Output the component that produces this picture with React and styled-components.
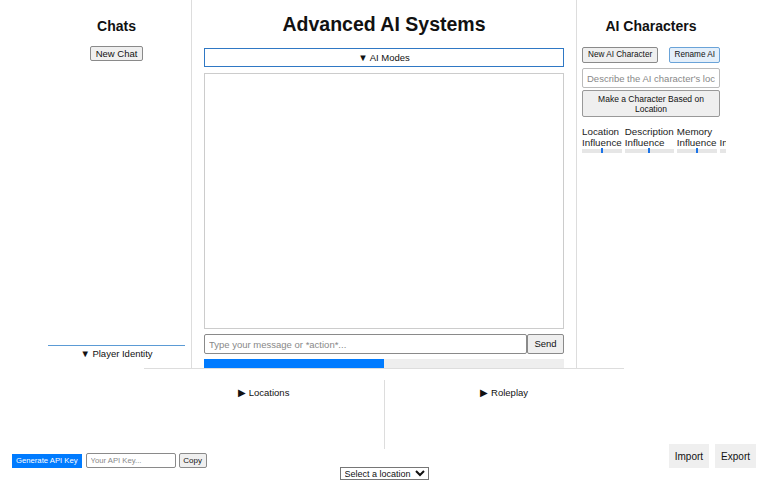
import React from 'react';
import styled, { createGlobalStyle } from 'styled-components';

const GlobalStyle = createGlobalStyle`
  html, body {
    margin: 0;
    padding: 0;
    background: #fff;
  }
  body {
    font-family: "Liberation Sans", Arial, sans-serif;
    color: #111;
    width: 768px;
    height: 480px;
    overflow: hidden;
  }
  * {
    box-sizing: border-box;
  }
  button, input, select {
    font-family: "Liberation Sans", Arial, sans-serif;
  }
`;

const MainRow = styled.div`
  display: flex;
  height: 368px;
`;

const LeftPanel = styled.aside`
  width: 192px;
  border-right: 1px solid #ddd;
  padding: 0 6px 0 48px;
  display: flex;
  flex-direction: column;
`;

const PanelTitle = styled.h2`
  margin: 18px 0 0;
  font-size: 14px;
  line-height: 17px;
  font-weight: 700;
  text-align: center;
`;

const GreyButton = styled.button`
  background: #efefef;
  border: 1px solid #8a8a8a;
  border-radius: 2px;
  color: #111;
  padding: 0 ${p => p.$pad || 5}px;
  font-size: ${p => p.$size || 9.5}px;
  height: ${p => p.$h || 15}px;
  line-height: 1;
  cursor: pointer;
`;

const NewChatButton = styled(GreyButton)`
  align-self: center;
  margin-top: 11px;
`;

const Spacer = styled.div`
  flex: 1;
`;

const Collapsible = styled.div`
  border-top: 1px solid #5b9bd5;
  height: 23px;
  padding-top: 1px;
  font-size: 9.5px;
  line-height: 13px;
  text-align: center;
`;

const CenterPanel = styled.main`
  width: 385px;
  border-right: 1px solid #ddd;
  padding: 0 12px;
  display: flex;
  flex-direction: column;
`;

const Title = styled.h1`
  margin: 13px 0 0;
  font-size: 19.5px;
  line-height: 23px;
  font-weight: 700;
  text-align: center;
`;

const ModesButton = styled.button`
  margin-top: 12px;
  height: 19px;
  width: 100%;
  background: #fff;
  border: 1px solid #2f78c4;
  font-size: 9.5px;
  color: #111;
  padding: 0;
`;

const ChatBox = styled.div`
  margin-top: 6px;
  flex: 1;
  border: 1px solid #ccc;
`;

const InputRow = styled.div`
  margin-top: 5px;
  display: flex;
  height: 20px;
`;

const TextInput = styled.input`
  flex: ${p => (p.$grow ? 1 : 'none')};
  width: ${p => p.$w || 'auto'};
  height: ${p => p.$h || 20}px;
  border: 1px solid ${p => p.$border || '#8a8a8a'};
  border-radius: 2px;
  padding: 0 4px;
  font-size: ${p => p.$size || 9.5}px;
  color: #111;
  outline: none;
  &::placeholder {
    color: #888;
  }
`;

const SendButton = styled(GreyButton)`
  width: 37px;
  padding: 0;
`;

const Progress = styled.div`
  margin-top: 5px;
  height: 9px;
  background: #eee;
  display: flex;
`;

const ProgressFill = styled.div`
  background: #007bff;
  height: 100%;
`;

const RightPanel = styled.aside`
  flex: 1;
  padding-left: 5px;
  overflow: hidden;
`;

const RightInner = styled.div`
  width: 138px;
  display: flex;
  flex-direction: column;
`;

const ButtonRow = styled.div`
  margin-top: 12px;
  display: flex;
  justify-content: space-between;
`;

const RenameButton = styled(GreyButton)`
  background: #e4effa;
  border-color: #6aa3d8;
`;

const DescribeInput = styled(TextInput)`
  margin-top: 5px;
  width: 100%;
`;

const MakeButton = styled.button`
  margin-top: 2px;
  width: 100%;
  height: 27px;
  background: #efefef;
  border: 1px solid #999;
  border-radius: 2px;
  font-size: 8.5px;
  line-height: 10px;
  padding: 0 12px;
  color: #111;
`;

const SliderRow = styled.div`
  margin-top: 9px;
  margin-right: -6px;
  display: flex;
  align-items: flex-end;
  gap: 3px;
  overflow: hidden;
`;

const SliderGroup = styled.div`
  width: min-content;
  flex: none;
`;

const SliderLabel = styled.div`
  font-size: 9.8px;
  line-height: 11px;
  color: #222;
`;

const Track = styled.div`
  margin-top: 1px;
  height: 4px;
  background: #e6e6e6;
  display: flex;
  justify-content: center;
  align-items: center;
`;

const Thumb = styled.div`
  width: 2px;
  height: 6px;
  background: #1a73e8;
`;

const Sections = styled.div`
  margin-left: 144px;
  width: 480px;
  height: 81px;
  border-top: 1px solid #ddd;
  padding-top: 11px;
  display: flex;
`;

const Section = styled.div`
  flex: 1;
  padding-top: 6px;
  font-size: 9.5px;
  line-height: 13px;
  text-align: center;
  border-left: ${p => (p.$divider ? '1px solid #ddd' : 'none')};
`;

const Footer = styled.footer`
  height: 31px;
  padding: 0 12px 0 12px;
  display: grid;
  grid-template-columns: 1fr auto 1fr;
  grid-template-rows: 31px;
  align-items: end;
`;

const ApiGroup = styled.div`
  display: flex;
  align-items: center;
  margin-bottom: 12px;
`;

const ApiButton = styled.button`
  background: #007bff;
  color: #fff;
  border: none;
  height: 14px;
  padding: 0 4px;
  font-size: 7.7px;
  margin-right: 4px;
`;

const CopyButton = styled(GreyButton)`
  margin-left: 3px;
  width: 28px;
  padding: 0;
`;

const LocationSelect = styled.select`
  height: 13px;
  font-size: 9px;
  padding: 0;
  border: 1px solid #767676;
  border-radius: 0;
  background: #fff;
  color: #111;
`;

const DataGroup = styled.div`
  justify-self: end;
  display: flex;
  gap: 6px;
  margin-bottom: 12px;
`;

const DataButton = styled.button`
  height: 24px;
  padding: 0 6px;
  background: #efefef;
  border: none;
  font-size: 10px;
  color: #111;
`;

const sliders = ['Location Influence', 'Description Influence', 'Memory Influence', 'Intensity'];

export default function App() {
  return (
    <>
      <GlobalStyle />
      <MainRow>
        <LeftPanel>
          <PanelTitle>Chats</PanelTitle>
          <NewChatButton>New Chat</NewChatButton>
          <Spacer />
          <Collapsible>▼ Player Identity</Collapsible>
        </LeftPanel>

        <CenterPanel>
          <Title>Advanced AI Systems</Title>
          <ModesButton>▼ AI Modes</ModesButton>
          <ChatBox />
          <InputRow>
            <TextInput $grow placeholder="Type your message or *action*..." />
            <SendButton $h={20}>Send</SendButton>
          </InputRow>
          <Progress>
            <ProgressFill style={{ width: '50%' }} />
          </Progress>
        </CenterPanel>

        <RightPanel>
          <RightInner>
            <PanelTitle>AI Characters</PanelTitle>
            <ButtonRow>
              <GreyButton $size={8.2} $h={16} $pad={5}>New AI Character</GreyButton>
              <RenameButton $size={8.2} $h={16} $pad={4}>Rename AI</RenameButton>
            </ButtonRow>
            <DescribeInput $border="#bbb" placeholder="Describe the AI character's location..." />
            <MakeButton>Make a Character Based on Location</MakeButton>
            <SliderRow>
              {sliders.map(label => (
                <SliderGroup key={label}>
                  <SliderLabel>{label}</SliderLabel>
                  <Track>
                    <Thumb />
                  </Track>
                </SliderGroup>
              ))}
            </SliderRow>
          </RightInner>
        </RightPanel>
      </MainRow>

      <Sections>
        <Section>▶ Locations</Section>
        <Section $divider>▶ Roleplay</Section>
      </Sections>

      <Footer>
        <ApiGroup>
          <ApiButton>Generate API Key</ApiButton>
          <TextInput $w="90px" $h={15} $size={7.7} placeholder="Your API Key..." />
          <CopyButton $size={8}>Copy</CopyButton>
        </ApiGroup>
        <LocationSelect defaultValue="">
          <option value="">Select a location</option>
        </LocationSelect>
        <DataGroup>
          <DataButton>Import</DataButton>
          <DataButton>Export</DataButton>
        </DataGroup>
      </Footer>
    </>
  );
}
